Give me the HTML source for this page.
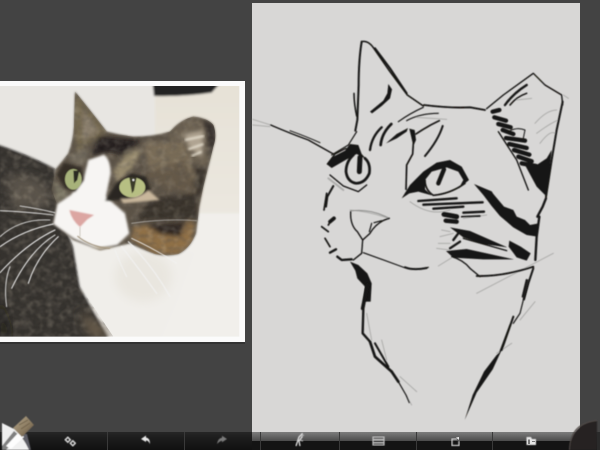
<!DOCTYPE html>
<html><head><meta charset="utf-8"><style>
html,body{margin:0;padding:0;width:600px;height:450px;overflow:hidden;background:#434343}
svg{display:block;position:absolute;left:0;top:0}
</style></head><body>
<svg width="600" height="450" viewBox="0 0 600 450" xmlns="http://www.w3.org/2000/svg">
<defs>
<filter id="b0" x="-5%" y="-5%" width="110%" height="110%"><feGaussianBlur stdDeviation="3.500"/></filter>
<filter id="bp" x="-10%" y="-10%" width="120%" height="120%"><feGaussianBlur stdDeviation="6"/></filter>
<filter id="b1" x="-30%" y="-30%" width="160%" height="160%"><feGaussianBlur stdDeviation="14"/></filter>
<filter id="w" x="-5%" y="-5%" width="110%" height="110%"><feGaussianBlur stdDeviation="1.500"/></filter>
<filter id="s" x="-2%" y="-2%" width="104%" height="104%"><feGaussianBlur stdDeviation="1.300"/></filter>
<filter id="ss"><feGaussianBlur stdDeviation=".4"/></filter>
<filter id="t" x="0" y="0" width="100%" height="100%"><feTurbulence type="fractalNoise" baseFrequency="0.045 0.08" numOctaves="2" seed="4"/><feColorMatrix values="0 0 0 0 0.09 0 0 0 0 0.08 0 0 0 0 0.07 2.200 0 0 0 -0.900"/><feGaussianBlur stdDeviation="2"/></filter>
<filter id="tl" x="0" y="0" width="100%" height="100%"><feTurbulence type="fractalNoise" baseFrequency="0.05" numOctaves="2" seed="11"/><feColorMatrix values="0 0 0 0 0.66 0 0 0 0 0.58 0 0 0 0 0.46 2 0 0 0 -0.900"/><feGaussianBlur stdDeviation="2"/></filter>
<clipPath id="pc"><rect x="0" y="18" width="718" height="752"/></clipPath>
<clipPath id="head"><path d="M225 35Q270 90 320 155Q360 165 400 170Q460 170 510 155Q540 120 580 110Q625 115 640 135Q652 165 640 200Q625 260 610 320L598 380L588 460Q570 505 535 522Q500 530 465 522Q420 505 390 490L300 510L220 480L160 430L170 370L155 330L165 270Q190 240 205 220Q220 180 222 140Z"/></clipPath>
<clipPath id="body"><path d="M0 195Q80 220 165 265L180 400L220 500L240 620L340 770H0Z"/></clipPath>
<linearGradient id="bar" x1="0" y1="0" x2="0" y2="1"><stop offset="0" stop-color="#262626"/><stop offset=".35" stop-color="#1c1c1c"/><stop offset="1" stop-color="#111"/></linearGradient>
<linearGradient id="under" x1="0" y1="0" x2="0" y2="1"><stop offset="0" stop-color="#7d7d7d"/><stop offset="1" stop-color="#4b4b4b"/></linearGradient>
<linearGradient id="ferr" x1="0" y1="0" x2="1" y2="1"><stop offset="0" stop-color="#b5a68a"/><stop offset=".6" stop-color="#8a7a60"/><stop offset="1" stop-color="#4f4232"/></linearGradient>
<linearGradient id="rbg" x1="0" y1="0" x2="0" y2="1"><stop offset="0" stop-color="#e6e1d6"/><stop offset=".5" stop-color="#ebe7df"/><stop offset="1" stop-color="#f2f0ec"/></linearGradient>
</defs>

<rect width="600" height="450" fill="#434343"/>

<!-- canvas -->
<rect x="252" y="3" width="328" height="430" fill="#d8d7d6"/>
<rect x="252" y="432" width="328" height="9" fill="url(#under)"/>

<!-- photo frame -->
<rect x="-2" y="81" width="247" height="261" fill="#fbfbfb"/>
<rect x="0" y="342" width="245" height="2" fill="#333"/>

<!-- photo -->
<g transform="translate(0,80) scale(.33333)">
<g clip-path="url(#pc)">
 <g filter="url(#b0)">
 <rect x="-30" y="-10" width="780" height="810" fill="#e8e6e2"/>
 <rect x="465" y="-10" width="290" height="810" fill="url(#rbg)"/>
 <rect x="330" y="400" width="420" height="400" fill="#f1efeb"/>
 <path d="M458 10H660L635 38Q560 50 462 48Z" fill="#242220"/>
 <path d="M215 480L230 610L285 690L345 800H470L530 660L580 520L400 480Z" fill="#f0eeea"/>
 <path d="M-30 185Q80 220 165 265L180 400L220 500L240 620L340 800H-30Z" fill="#36322e"/>
 </g>
 <ellipse cx="430" cy="590" rx="85" ry="75" fill="#e9e6df" filter="url(#b1)"/>
 <g clip-path="url(#body)">
  <path d="M20 290Q90 270 150 330L150 380L40 390Z" fill="#5c554c" filter="url(#b1)"/>
  <rect x="0" y="190" width="350" height="580" filter="url(#tl)" opacity=".3"/>
  <rect x="0" y="190" width="350" height="580" filter="url(#t)" opacity=".45"/>
  <path d="M0 650L30 770H0Z" fill="#1c1a18" filter="url(#b1)"/>
  <path d="M240 690L340 770H270Z" fill="#6b5d4c" filter="url(#b1)"/>
 </g>
 <!-- head -->
 <g filter="url(#b0)"><path d="M225 35Q270 90 320 155Q360 165 400 170Q460 170 510 155Q540 120 580 110Q625 115 640 135Q652 165 640 200Q625 260 610 320L598 380L588 460Q570 505 535 522Q500 530 465 522Q420 505 390 490L300 510L220 480L160 430L170 370L155 330L165 270Q190 240 205 220Q220 180 222 140Z" fill="#5b5246"/></g>
 <g clip-path="url(#head)">
  <g filter="url(#bp)">
  <path d="M225 35L320 155L280 180L230 215L222 140Z" fill="#75694f"/>
  <path d="M248 90L295 150L250 185Z" fill="#8c806e"/>
  <path d="M500 165L570 110L640 130L648 170L620 260L560 240Z" fill="#6e6353"/>
  <path d="M605 118L645 135L650 175L628 250L618 160Z" fill="#38332e"/>
  <path d="M555 255L620 270L600 355L565 330Z" fill="#38322c"/>
  <path d="M275 225L295 170L425 180L365 225L335 215Z" fill="#201e1d"/>
  <path d="M205 225L268 205L255 255L215 250Z" fill="#756d5e"/>
  <path d="M430 185L550 190L590 300L520 300L440 260Z" fill="#7a6d58"/>
  <path d="M340 270L385 215L425 210L400 260L350 310Z" fill="#9a8d70"/>
  <path d="M430 280L555 240L590 340L500 330Z" fill="#665a48"/>
  <path d="M450 355L590 340L590 420L410 420Z" fill="#383129"/>
  <path d="M400 440L585 425L575 490L535 522L465 522L395 480Z" fill="#8f6f46"/>
  <path d="M440 435L560 428L540 470L480 462Z" fill="#2f2720"/>
  <path d="M160 300L195 330L210 345L170 370Z" fill="#7d7866"/>
  </g>
  <rect x="160" y="30" width="490" height="500" filter="url(#tl)" opacity=".25"/>
  <rect x="160" y="30" width="490" height="500" filter="url(#t)" opacity=".4"/>
  <path d="M550 162L612 150L606 232L570 205Z" fill="#b0a492" filter="url(#bp)"/>
  <g fill="none" stroke="#e6dfcf" stroke-width="6" filter="url(#b0)"><path d="M555 180L612 168M565 208L610 192M575 228L605 215"/></g>
 </g>
 <g filter="url(#w)">
 <path d="M312 224Q332 240 332 280L318 350L375 400L388 460L352 495L290 506L222 476L160 432L172 372L212 345L250 300L265 240Z" fill="#f7f5f3" filter="url(#b0)"/>
 <path d="M270 500L345 500L300 510Z" fill="#b9ae9a" filter="url(#b0)"/>
 <!-- eyes -->
 <path d="M192 248L245 262L250 300L225 335L195 325L170 285Z" fill="#352f26" filter="url(#b0)"/>
 <ellipse cx="220" cy="298" rx="25" ry="31" fill="#a7b27a"/>
 <path d="M220 272L238 272L232 300L222 310Z" fill="#2a2a22"/>
 <path d="M316 362L350 308L395 280L438 290L452 330L420 350L370 360Z" fill="#2c2820" filter="url(#b0)"/>
 <ellipse cx="397" cy="322" rx="39" ry="30" fill="#b7bf83"/>
 <path d="M388 292L410 292L402 332L396 340Z" fill="#3b3a2a"/>
 <circle cx="400" cy="300" r="3" fill="#fff"/>
 <path d="M360 355Q410 360 445 330L480 360L370 370Z" fill="#c9b79c" filter="url(#b0)"/>
 <!-- nose -->
 <path d="M208 390L282 405L262 418L240 441Q215 420 208 390Z" fill="#dca6a2" filter="url(#w)"/>
 <path d="M240 441L240 470" stroke="#b7ada0" stroke-width="2" fill="none"/>
 <path d="M232 468Q270 500 330 505" stroke="#a89a82" stroke-width="4" fill="none"/>
 </g>
 <!-- whiskers -->
 <g fill="none" stroke="#f2f2f2" stroke-linecap="round" filter="url(#w)">
  <path stroke-width="3" d="M160 432Q70 450 0 500"/>
  <path stroke-width="3" d="M165 450Q80 490 0 578"/>
  <path stroke-width="3" d="M165 465Q90 510 35 625"/>
  <path stroke-width="3" d="M175 470Q110 530 85 610"/>
  <path stroke-width="2.500" d="M160 405Q80 395 0 392"/>
  <path stroke-width="2.500" d="M165 398Q110 385 60 378"/>
  <path stroke-width="2.500" d="M150 420Q60 415 0 470"/>
  <path stroke-width="2.500" d="M30 560Q10 610 20 680"/>
  <path stroke-width="3" d="M365 500Q420 570 470 640"/>
  <path stroke-width="3" d="M385 485Q460 560 510 650"/>
  <path stroke-width="2.500" d="M345 510Q360 550 380 590"/>
  <path stroke-width="2.500" d="M395 475Q470 510 530 550"/>
  <path stroke-width="2" d="M395 430Q490 415 590 422" opacity=".7"/>
 </g>
</g>
</g>

<!-- sketch head -->
<g transform="translate(250,30) scale(.33333)" fill="none" stroke="#141312" stroke-linecap="round" stroke-linejoin="round" filter="url(#s)">
 <g stroke="#a3a3a1" stroke-width="3" opacity=".8">
  <path d="M8 268L62 285"/><path d="M8 285L60 290"/>
  <path d="M680 790L910 670"/><path d="M565 708L610 680"/>
  <path d="M300 540Q360 545 415 565"/>
  <path d="M480 515Q540 560 600 540"/>
  <path d="M855 280Q890 240 920 240M860 310Q900 280 925 270M870 340Q900 300 915 310"/>
  <path d="M800 210L845 205"/><path d="M500 262L590 268"/><path d="M940 195L955 205"/>
  <path d="M570 620L610 610M565 640L600 640M560 655L600 660M575 600L600 605"/>
  <path d="M640 565L710 555"/><path d="M235 445L280 480" stroke-width="6"/>
 </g>
 <!-- whisker left -->
 <path stroke-width="4" d="M62 285Q120 310 175 330L250 372"/>
 <path stroke-width="3" d="M120 302Q170 320 210 338"/>
 <!-- left ear -->
 <path stroke-width="6" d="M335 35Q326 90 326 165L322 270L316 302"/>
 <path stroke-width="4.500" d="M312 190Q312 220 320 258"/>
 <path stroke-width="4.500" d="M335 35Q352 30 368 50L420 125L472 195L520 228"/>
 <path stroke-width="6" d="M375 55L420 115L470 190"/>
 <path stroke="none" fill="#141312" d="M360 245L400 212L412 190L415 162L426 178L420 205L395 228L366 250Z"/>
 <!-- crown line -->
 <path stroke-width="5.500" d="M522 225Q600 235 660 232L705 240"/>
 <path stroke-width="3.500" d="M520 232Q480 250 445 275"/>
 <path stroke-width="3.500" d="M470 272Q510 250 565 250"/>
 <path stroke-width="3.500" d="M320 305L295 345L245 375"/>
 <!-- right ear -->
 <path stroke-width="4" d="M710 236L760 195L850 130L885 165L935 195L938 225"/>
 <path stroke-width="6" d="M938 215L920 300L905 390L888 500"/>
 <path stroke-width="7" d="M765 225Q790 190 830 165"/>
 <path stroke-width="4.500" d="M780 225Q800 200 830 190"/>
 <g stroke-width="13">
  <path d="M728 245L748 240M733 262L768 272M745 282L782 292M758 300L790 312"/>
  <path d="M768 324L825 332M778 342L830 354M792 360L838 374M805 380L845 394M815 400L858 408"/>
 </g>
 <path stroke-width="4" d="M745 305L800 390L835 480"/>
 <path stroke="none" fill="#141312" d="M825 405L860 405L890 385L905 360L890 500L860 470Z"/>
 <path stroke-width="3" d="M775 305Q800 290 825 300L820 325"/>
 <path stroke-width="7" d="M888 505L878 530L862 560"/>
 <!-- forehead stripes -->
 <path stroke-width="7" d="M395 292Q365 320 360 360"/>
 <path stroke-width="8" d="M424 282Q395 310 392 345"/>
 <path stroke="none" fill="#141312" d="M408 340L440 312L474 294L470 305L440 325Z"/>
 <path stroke="none" fill="#141312" d="M478 296L494 300L498 330L490 348Z"/>
 <path stroke-width="5" d="M490 340L488 372L470 405L468 478"/>
 <path stroke-width="5" d="M498 312Q530 290 568 272"/>
 <path stroke-width="6" d="M578 288Q565 330 525 378"/>
 <!-- left eye -->
 <path stroke="none" fill="#141312" d="M232 404L250 380L285 362L300 342L325 345L335 372L362 402L345 385L320 372L290 388L245 414Z"/>
 <path stroke-width="8" d="M345 385Q362 400 358 430Q345 460 318 460Q292 455 288 425Q288 395 310 375"/>
 <path stroke-width="15" d="M330 382L328 425"/>
 <path stroke-width="4" d="M232 402L255 372L288 355"/>
 <path stroke-width="4" d="M240 435L280 468L325 485L350 465"/>
 <path stroke-width="6" d="M250 468L232 500L228 530"/>
 <!-- right eye -->
 <path stroke="none" fill="#141312" d="M455 505L480 465L520 425L560 398L600 390L635 410L657 450L640 464L626 476L640 450L625 425L590 412L545 425L525 450L525 478L545 496L505 485L478 490Z"/>
 <path stroke-width="5" d="M525 450Q525 480 550 496Q600 492 645 460"/>
 <path stroke-width="13" d="M582 418L565 460"/>
 <!-- under-eye stripes -->
 <g stroke-width="7">
  <path d="M505 513L620 505"/><path d="M520 524L698 517"/><path d="M550 536L640 530"/>
  <path d="M640 548L702 545"/><path d="M635 560L690 558" stroke-width="5"/>
 </g>
 <path stroke-width="15" d="M582 553L620 560"/><path stroke-width="13" d="M587 572L620 575"/>
 <!-- big diagonal stripe -->
 <path stroke="none" fill="#141312" d="M672 462L725 484L730 492L762 530L790 540L800 560L825 570L840 585L866 580L862 620L830 615L790 592L750 558L725 528L700 495Z"/>
 <path stroke-width="7" d="M868 560L860 620L856 690"/>
 <!-- whisker stripes -->
 <path stroke="none" fill="#141312" d="M600 592L660 603L772 652L700 642L640 622Z"/>
 <path stroke-width="4" d="M640 625L770 662"/>
 <path stroke="none" fill="#141312" d="M588 663L650 657L792 688L700 688L610 683Z"/>
 <path stroke="none" fill="#141312" d="M778 632L812 650L842 670L830 692L800 682L776 650Z"/>
 <path stroke-width="7" d="M625 610L610 630M630 635L600 655"/>
 <!-- lower jaw -->
 <path stroke-width="4" d="M605 680Q640 690 660 715L690 740"/>
 <path stroke-width="5.500" d="M680 738Q760 740 850 710"/>
 <path stroke-width="6" d="M850 715L835 760L822 808"/>
 <!-- nose -->
 <path stroke="#8f8f8d" stroke-width="3" d="M302 543Q360 535 418 565"/>
 <path stroke-width="4" d="M302 545Q300 585 322 605L338 630"/>
 <path stroke-width="4" d="M418 565Q380 575 360 610L338 630"/>
 <path stroke-width="3.500" d="M365 580L358 605M372 578L395 572"/>
 <path stroke-width="4" d="M338 630L335 670L310 690"/>
 <path stroke-width="3.500" d="M340 668Q400 690 450 708Q490 725 535 712"/>
 <path stroke-width="6" d="M465 712Q490 722 530 714"/>
 <!-- left cheek -->
 <path stroke-width="5" d="M230 490L222 540M248 565L235 585M215 590L235 605M225 625L240 650"/>
 <path stroke-width="11" d="M240 575L252 565"/>
 <path stroke-width="7" d="M240 668L258 658M262 680L275 690L305 688"/>
 <!-- neck start -->
 <path stroke="none" fill="#141312" d="M300 695L325 705L352 730L365 760L362 815L340 815L345 770L322 745L316 722Z"/>
</g>

<!-- sketch body -->
<g transform="translate(320,200) scale(.33333)" fill="none" stroke="#141312" stroke-linecap="round" stroke-linejoin="round" filter="url(#s)">
 <g stroke="#a3a3a1" stroke-width="3" opacity=".8">
  <path d="M140 340L155 420"/><path d="M185 420L200 480"/>
  <path d="M240 530L290 575"/><path d="M600 360L645 305"/>
  <path d="M530 460L575 430"/><path d="M260 590L275 615"/>
 </g>
 <path stroke-width="11" d="M142 255L128 325"/>
 <path stroke-width="7" d="M130 325L128 400L150 425"/>
 <path stroke-width="8" d="M150 425L165 470L215 515"/>
 <path stroke-width="6" d="M165 430L205 500"/>
 <path stroke-width="8" d="M215 515L235 545"/>
 <path stroke-width="3.500" d="M235 545L258 585L268 608"/>
 <path stroke-width="6" d="M620 240L608 290"/>
 <path stroke-width="3.500" d="M625 240L600 340L580 370"/>
 <path stroke-width="6" d="M580 350L545 450"/>
 <path stroke-width="4" d="M570 375L540 455"/>
 <path stroke="none" fill="#141312" d="M545 450L518 508L470 578L434 660L458 585L492 515L530 465Z"/>
</g>

<!-- toolbar -->
<rect x="0" y="432" width="252" height="18" fill="url(#bar)"/>
<path d="M252 441H600V450H252Z" fill="#141414"/>
<rect x="580" y="432" width="20" height="18" fill="url(#bar)"/>
<g stroke="#3a3a3a" stroke-width="1">
 <path d="M107.500 432V450M184.500 432V450M260.500 432V450M339.500 432V450M416.500 432V450M492.500 432V450"/>
</g>

<!-- brush button -->
<g filter="url(#ss)">
 <path d="M2 423L18 431L30 450H2Z" fill="#f0f0f0"/>
 <path d="M21 434L29 450H31L27 434Z" fill="#5f5f66"/>
 <path d="M2 446L14 431L20 436L6 450H2Z" fill="#808080"/>
 <path d="M6 446L19 432L24 437L11 449Z" fill="#fdfdfd"/>
 <path d="M13 428L26 416L34 425L22 437Z" fill="url(#ferr)"/>
 <path d="M19 425L28 420M21 429L30 423" stroke="#6d5e48" stroke-width=".8"/>
</g>

<!-- settings icon -->
<g fill="none" stroke="#d6d6d6" stroke-width="1.500" filter="url(#ss)">
 <rect x="66" y="438" width="3.500" height="3.500" transform="rotate(45 67.800 439.800)"/>
 <rect x="71" y="441.500" width="3.500" height="3.500" transform="rotate(45 72.800 443.300)"/>
</g>
<!-- undo -->
<path d="M141 439L146 435.500L146 437.500Q150 438 150 444Q148 440 146 440.500L146 442Z" fill="#e8e8e8" filter="url(#ss)"/>
<!-- redo -->
<path d="M227 439L222 435.800L222 437.700Q218 438 217 444Q220 441 222 440.800L222 442.300Z" fill="#7a7a7a" filter="url(#ss)"/>
<!-- gesture -->
<g stroke="#e0e0e0" fill="none" stroke-width="1.300" filter="url(#ss)">
 <path d="M296 446L299 437L302 434L302 437L299 441L300 446"/>
 <path d="M301 436L304 435M300 440L303 441" stroke="#aaa"/>
</g>
<!-- layers -->
<g fill="none" stroke="#c0c0c0" stroke-width="1.200" filter="url(#ss)">
 <rect x="373" y="437" width="11" height="2.500"/>
 <rect x="373" y="440" width="11" height="2.500"/>
 <rect x="373" y="443" width="11" height="2"/>
</g>
<!-- export -->
<g fill="none" stroke="#d0d0d0" stroke-width="1.300" filter="url(#ss)">
 <path d="M457 439H452V445.500H459V441"/>
</g>
<path d="M456 437.500L459 437L459 440Z" fill="#e8e8e8"/>
<!-- gallery -->
<path d="M526.500 437H531L532 439H536V445H526.500Z" fill="#e5e5e5" filter="url(#ss)"/>
<path d="M528 439.500H530V444H528ZM532 441H535V442H532Z" fill="#777"/>

<!-- colour wheel -->
<g filter="url(#ss)">
 <path d="M570 450Q571 424 597 421V450Z" fill="#282220"/>
 <path d="M569.500 450Q570 423 597 420.500" fill="none" stroke="#504a46" stroke-width="1"/>
</g>
<rect x="597" y="432" width="3" height="18" fill="#2a2a2a"/>
</svg>
</body></html>
